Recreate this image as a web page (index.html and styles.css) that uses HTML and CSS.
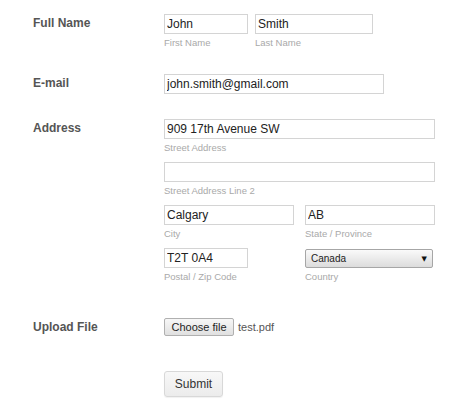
FILE: index.html
```html
<!DOCTYPE html>
<html lang="en">
<head>
<meta charset="utf-8">
<title>Form</title>
<link rel="stylesheet" href="styles.css">
</head>
<body>
<form class="form">
  <div class="row">
    <div class="label">Full Name</div>
    <div class="field pair">
      <div class="sub">
        <input class="input w-first" type="text" value="John">
        <div class="hint">First Name</div>
      </div>
      <div class="sub">
        <input class="input w-last" type="text" value="Smith">
        <div class="hint">Last Name</div>
      </div>
    </div>
  </div>

  <div class="row">
    <div class="label">E-mail</div>
    <div class="field">
      <input class="input w-email" type="text" value="john.smith@gmail.com">
    </div>
  </div>

  <div class="row row-wide">
    <div class="label">Address</div>
    <div class="field address">
      <div class="sub span2">
        <input class="input w-full" type="text" value="909 17th Avenue SW">
        <div class="hint">Street Address</div>
      </div>
      <div class="sub span2">
        <input class="input w-full" type="text" value="">
        <div class="hint">Street Address Line 2</div>
      </div>
      <div class="sub">
        <input class="input w-half" type="text" value="Calgary">
        <div class="hint">City</div>
      </div>
      <div class="sub">
        <input class="input w-half" type="text" value="AB">
        <div class="hint">State / Province</div>
      </div>
      <div class="sub">
        <input class="input w-first" type="text" value="T2T 0A4">
        <div class="hint">Postal / Zip Code</div>
      </div>
      <div class="sub">
        <div class="select"><span>Canada</span><span class="arrow">▼</span></div>
        <div class="hint">Country</div>
      </div>
    </div>
  </div>

  <div class="row row-wide">
    <div class="label">Upload File</div>
    <div class="field file">
      <span class="file-btn">Choose file</span>
      <span class="file-name">test.pdf</span>
    </div>
  </div>

  <div class="row">
    <div class="label"></div>
    <div class="field">
      <button class="submit" type="button">Submit</button>
    </div>
  </div>
</form>
</body>
</html>
```

FILE: styles.css
```css
html, body {
  margin: 0;
  padding: 0;
  background: #ffffff;
}

body {
  font-family: "Liberation Sans", Arial, sans-serif;
  color: #333333;
}

.form {
  display: flex;
  flex-direction: column;
  padding: 14px 0 0 33px;
}

.row {
  display: grid;
  grid-template-columns: 131px 1fr;
  align-items: start;
  margin-bottom: 25px;
}

.row-wide {
  margin-bottom: 35px;
}

.label {
  font-size: 12px;
  font-weight: bold;
  line-height: 18px;
  color: #555555;
}

.field {
  display: flex;
  flex-direction: column;
}

.pair {
  flex-direction: row;
  gap: 7px;
}

.address {
  display: grid;
  grid-template-columns: 130px 130px;
  column-gap: 11px;
  row-gap: 8px;
}

.span2 {
  grid-column: 1 / 3;
}

.sub {
  display: flex;
  flex-direction: column;
}

.input {
  box-sizing: border-box;
  height: 20px;
  margin: 0;
  padding: 0 2px;
  border: 1px solid #d4d4d4;
  border-radius: 0;
  background: #ffffff;
  font-family: "Liberation Sans", Arial, sans-serif;
  font-size: 12px;
  color: #222222;
  outline: none;
}

.w-first { width: 84px; }
.w-last { width: 118px; }
.w-email { width: 220px; }
.w-full { width: 271px; }
.w-half { width: 130px; }

.hint {
  padding-top: 2px;
  font-size: 9.5px;
  line-height: 13px;
  color: #a9a9a9;
}

.select {
  box-sizing: border-box;
  width: 128px;
  height: 19px;
  margin-top: 1px;
  display: flex;
  align-items: center;
  justify-content: space-between;
  padding: 0 5px 0 5px;
  border: 1px solid #a6a6a6;
  border-radius: 2px;
  background: linear-gradient(#fafafa, #dcdcdc);
  font-size: 10px;
  color: #222222;
}

.arrow {
  font-family: "DejaVu Sans", sans-serif;
  font-size: 7px;
  color: #111111;
}

.file {
  flex-direction: row;
  align-items: center;
  gap: 4px;
}

.file-btn {
  box-sizing: border-box;
  width: 70px;
  height: 18px;
  display: flex;
  align-items: center;
  justify-content: center;
  border: 1px solid #b0b0b0;
  border-radius: 2px;
  background: linear-gradient(#f7f7f7, #e0e0e0);
  font-size: 11px;
  color: #1e1e1e;
}

.file-name {
  font-size: 11px;
  color: #555555;
}

.submit {
  box-sizing: border-box;
  width: 59px;
  height: 26px;
  margin: 0;
  padding: 0;
  border: 1px solid #d8d8d8;
  border-radius: 3px;
  background: linear-gradient(#f8f8f8, #ececec);
  box-shadow: 0 1px 1px rgba(0, 0, 0, 0.06);
  font-family: "Liberation Sans", Arial, sans-serif;
  font-size: 12px;
  color: #333333;
}
```
